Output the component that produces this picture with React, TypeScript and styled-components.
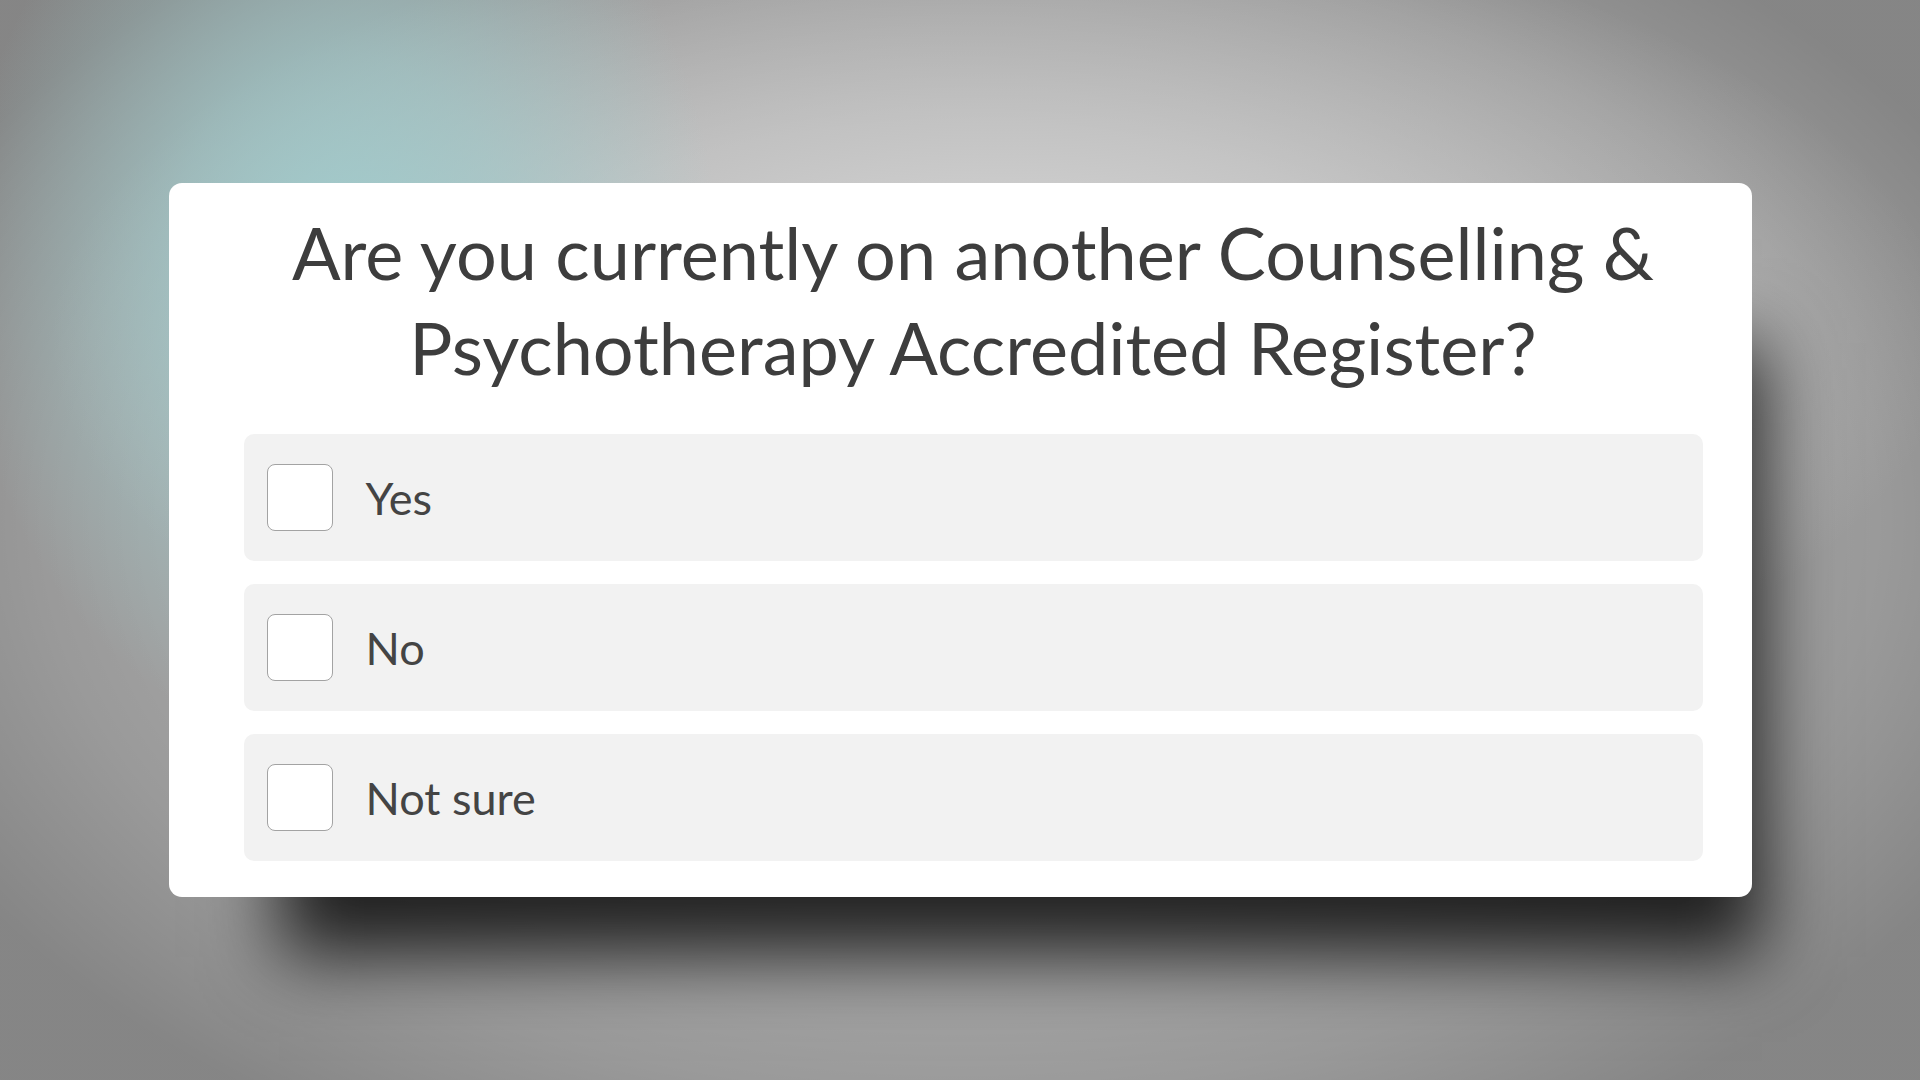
import React from "react";
import styled, { createGlobalStyle } from "styled-components";

const GlobalStyle = createGlobalStyle`
  html, body {
    margin: 0;
    padding: 0;
    height: 100%;
  }
  body {
    font-family: "Lato", "Noto Sans", sans-serif;
    overflow: hidden;
  }
`;

const Page = styled.div`
  width: 100vw;
  height: 100vh;
  display: flex;
  align-items: center;
  justify-content: center;
  background-color: #ababab;
  background-image:
    radial-gradient(ellipse 380px 480px at 340px 270px, rgba(160, 206, 207, 0.95) 0%, rgba(160, 206, 207, 0.6) 45%, rgba(160, 206, 207, 0) 100%),
    radial-gradient(ellipse 950px 430px at 1000px 340px, rgba(225, 225, 225, 0.95) 0%, rgba(215, 215, 215, 0.55) 50%, rgba(200, 200, 200, 0) 100%),
    radial-gradient(ellipse 1150px 720px at 960px 520px, rgba(0, 0, 0, 0) 55%, rgba(0, 0, 0, 0.1) 80%, rgba(0, 0, 0, 0.22) 100%);
`;

const Card = styled.section`
  width: 1583px;
  box-sizing: border-box;
  background: #ffffff;
  border-radius: 13px;
  padding: 22px 49px 36px 75px;
  box-shadow: 60px 110px 70px -50px rgba(0, 0, 0, 0.8);
  display: flex;
  flex-direction: column;
`;

const Question = styled.h1`
  margin: 0 0 39px 0;
  font-family: "Lato", "Noto Sans", sans-serif;
  font-weight: 400;
  font-size: 72px;
  line-height: 95px;
  color: #3d3d3d;
  text-align: center;
`;

const OptionList = styled.div`
  display: flex;
  flex-direction: column;
  gap: 23px;
`;

const OptionRow = styled.label`
  display: flex;
  align-items: center;
  gap: 33px;
  height: 127px;
  padding: 0 23px;
  background: #f2f2f2;
  border-radius: 10px;
  cursor: pointer;
`;

const Box = styled.span`
  width: 64px;
  height: 65px;
  flex: none;
  background: #ffffff;
  border: 1.5px solid #a3a3a3;
  border-radius: 8px;
`;

const OptionText = styled.span`
  font-family: "Lato", "Noto Sans", sans-serif;
  font-size: 45px;
  color: #444444;
`;

const options = ["Yes", "No", "Not sure"];

export default function App() {
  return (
    <>
      <GlobalStyle />
      <Page>
        <Card>
          <Question>
            Are you currently on another Counselling &amp;
            <br />
            Psychotherapy Accredited Register?
          </Question>
          <OptionList>
            {options.map((o) => (
              <OptionRow key={o}>
                <Box />
                <OptionText>{o}</OptionText>
              </OptionRow>
            ))}
          </OptionList>
        </Card>
      </Page>
    </>
  );
}
